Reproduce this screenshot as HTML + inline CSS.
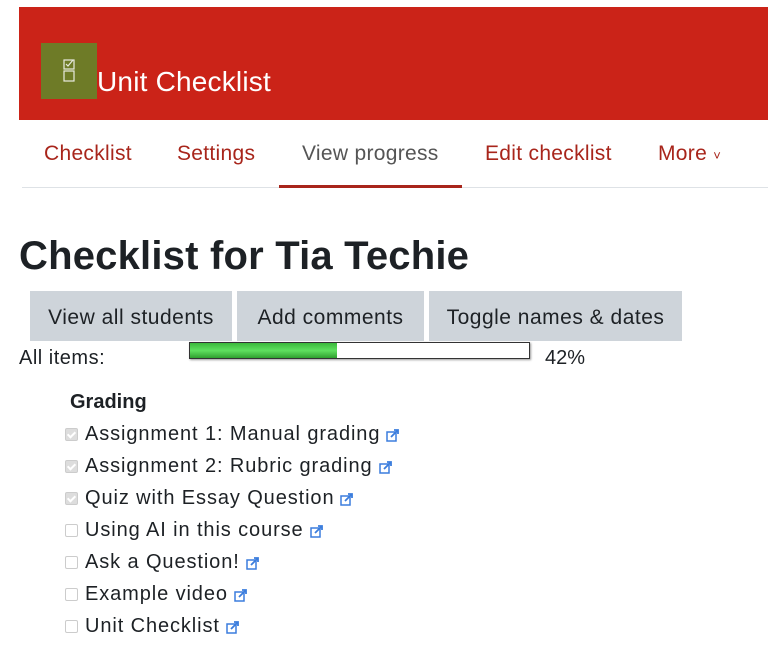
<!DOCTYPE html>
<html><head><style>
body{margin:0;background:#fff;font-family:"Liberation Sans",sans-serif;width:768px;height:663px;overflow:hidden;position:relative;color:#1d2125}
.a{position:absolute;white-space:nowrap}
.hdr{left:19px;top:7px;width:749px;height:113px;background:#cb2318}
.ico{left:41px;top:43px;width:56px;height:56px;background:#6e7b27}
.nav{top:142px;font-size:21px;color:#a8251b;letter-spacing:0.3px}
.btn{top:291px;height:50px;background:#ced4da;font-size:21px;line-height:54px;text-align:center;color:#1d2125;letter-spacing:0.5px}
.it{font-size:20px;left:85px;letter-spacing:0.9px}
.cb{position:absolute;left:65px;width:11px;height:11px;border:1px solid #ccc;border-radius:2px;background:#fff}
.ck{background:#ddd}
.ck::after{content:"";position:absolute;left:3px;top:1px;width:3px;height:6px;border:solid #fff;border-width:0 2px 2px 0;transform:rotate(45deg)}
.lk{display:inline-block;vertical-align:middle;margin-left:6px}
</style></head><body>
<div class="a hdr"></div>
<div class="a ico"><svg width="56" height="56"><g fill="none" stroke="#e8eadf" stroke-width="1.2"><rect x="23" y="17" width="10" height="9"/><rect x="23" y="28" width="10" height="10"/><path d="M25 21l2 2 5-6"/></g></svg></div>
<div class="a" style="left:97px;top:66px;font-size:28px;color:#fff;letter-spacing:0.2px">Unit Checklist</div>
<div class="a nav" style="left:44px">Checklist</div>
<div class="a nav" style="left:177px">Settings</div>
<div class="a nav" style="left:302px;color:#555">View progress</div>
<div class="a nav" style="left:485px">Edit checklist</div>
<div class="a nav" style="left:658px">More <span style="font-size:13px">&#x2C5;</span></div>
<div class="a" style="left:22px;top:187px;width:746px;height:1px;background:#dee2e6"></div>
<div class="a" style="left:279px;top:185px;width:183px;height:3px;background:#a8251b"></div>
<div class="a" style="left:19px;top:234px;font-size:40px;font-weight:bold;color:#1d2125;letter-spacing:0.2px">Checklist for Tia Techie</div>
<div class="a btn" style="left:30px;width:202px">View all students</div>
<div class="a btn" style="left:237px;width:187px">Add comments</div>
<div class="a btn" style="left:429px;width:253px">Toggle names &amp; dates</div>
<div class="a" style="left:19px;top:347px;font-size:20px;letter-spacing:0.5px">All items:</div>
<div class="a" style="left:189px;top:342px;width:339px;height:15px;border:1px solid #333;background:#fff;box-shadow:1px 1px 2px #999"><div style="width:147px;height:15px;background:linear-gradient(#3bb83b,#5fe05f 50%,#2fa02f)"></div></div>
<div class="a" style="left:545px;top:347px;font-size:20px">42%</div>
<div class="a" style="left:70px;top:391px;font-size:20px;font-weight:bold">Grading</div>
<div class="cb ck" style="top:428px"></div><div class="a it" style="top:423px">Assignment 1: Manual grading<svg class="lk" width="14" height="14"><rect x="1" y="4" width="9" height="9" fill="none" stroke="#3b7ddd" stroke-width="1.5"/><path d="M5 9l7-7M8 2h4v4" fill="none" stroke="#3b7ddd" stroke-width="1.8"/></svg></div>
<div class="cb ck" style="top:460px"></div><div class="a it" style="top:455px">Assignment 2: Rubric grading<svg class="lk" width="14" height="14"><rect x="1" y="4" width="9" height="9" fill="none" stroke="#3b7ddd" stroke-width="1.5"/><path d="M5 9l7-7M8 2h4v4" fill="none" stroke="#3b7ddd" stroke-width="1.8"/></svg></div>
<div class="cb ck" style="top:492px"></div><div class="a it" style="top:487px">Quiz with Essay Question<svg class="lk" width="14" height="14"><rect x="1" y="4" width="9" height="9" fill="none" stroke="#3b7ddd" stroke-width="1.5"/><path d="M5 9l7-7M8 2h4v4" fill="none" stroke="#3b7ddd" stroke-width="1.8"/></svg></div>
<div class="cb" style="top:524px"></div><div class="a it" style="top:519px">Using AI in this course<svg class="lk" width="14" height="14"><rect x="1" y="4" width="9" height="9" fill="none" stroke="#3b7ddd" stroke-width="1.5"/><path d="M5 9l7-7M8 2h4v4" fill="none" stroke="#3b7ddd" stroke-width="1.8"/></svg></div>
<div class="cb" style="top:556px"></div><div class="a it" style="top:551px">Ask a Question!<svg class="lk" width="14" height="14"><rect x="1" y="4" width="9" height="9" fill="none" stroke="#3b7ddd" stroke-width="1.5"/><path d="M5 9l7-7M8 2h4v4" fill="none" stroke="#3b7ddd" stroke-width="1.8"/></svg></div>
<div class="cb" style="top:588px"></div><div class="a it" style="top:583px">Example video<svg class="lk" width="14" height="14"><rect x="1" y="4" width="9" height="9" fill="none" stroke="#3b7ddd" stroke-width="1.5"/><path d="M5 9l7-7M8 2h4v4" fill="none" stroke="#3b7ddd" stroke-width="1.8"/></svg></div>
<div class="cb" style="top:620px"></div><div class="a it" style="top:615px">Unit Checklist<svg class="lk" width="14" height="14"><rect x="1" y="4" width="9" height="9" fill="none" stroke="#3b7ddd" stroke-width="1.5"/><path d="M5 9l7-7M8 2h4v4" fill="none" stroke="#3b7ddd" stroke-width="1.8"/></svg></div>
</body></html>
